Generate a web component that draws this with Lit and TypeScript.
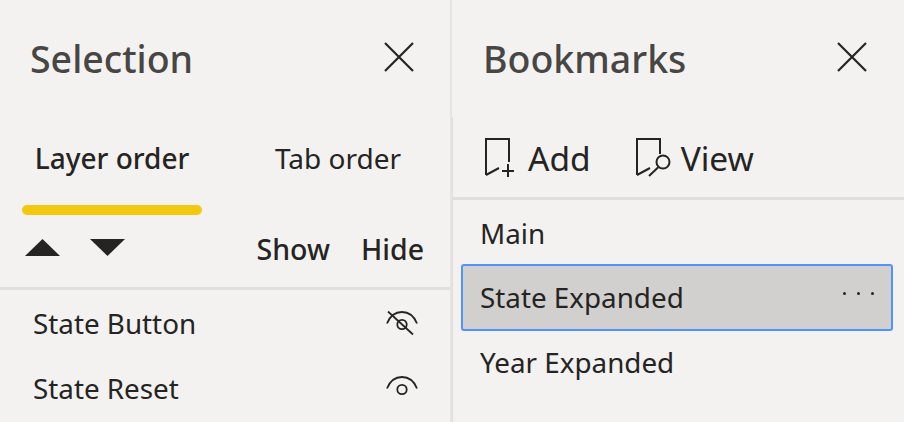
import { LitElement, css, html, svg, TemplateResult } from "lit";
import { customElement } from "lit/decorators.js";

const closeIcon = html`<svg class="close" width="32" height="32" viewBox="0 0 32 32">
    <path d="M2 2L30 30M30 2L2 30" fill="none" stroke="#252423" stroke-width="2.2" />
</svg>`;

const eyeArc = svg`<path d="M1 12.500C4 5 9 1 16 1S28 5 31 12.500" fill="none" stroke="#252423" stroke-width="1.800" />`;

const eyeOpen = html`<svg width="32" height="26" viewBox="0 0 32 26">
    ${eyeArc}
    <circle cx="16" cy="13.500" r="4.700" fill="none" stroke="#252423" stroke-width="1.800" />
</svg>`;

const eyeOff = html`<svg width="32" height="26" viewBox="0 0 32 26">
    ${eyeArc}
    <circle cx="16" cy="13.500" r="4.700" fill="none" stroke="#252423" stroke-width="1.800" />
    <path d="M2 0.500L27 23.500" fill="none" stroke="#252423" stroke-width="1.800" />
</svg>`;

const bookmarkAdd = html`<svg width="34" height="40" viewBox="0 0 34 40">
    <path d="M1 38V2H24V25M1 38L14 31" fill="none" stroke="#252423" stroke-width="2" />
    <path d="M17 34H29M23 27V40" fill="none" stroke="#252423" stroke-width="2" />
</svg>`;

const bookmarkView = html`<svg width="36" height="40" viewBox="0 0 36 40">
    <path d="M1 38V2H24V17M1 38L14 31" fill="none" stroke="#252423" stroke-width="2" />
    <circle cx="27" cy="25" r="6.500" fill="none" stroke="#252423" stroke-width="2" />
    <path d="M13 39L22.500 30" fill="none" stroke="#252423" stroke-width="2" />
</svg>`;

const triangle = (up: boolean): TemplateResult => html`<svg width="35" height="17" viewBox="0 0 35 17">
    <path d=${up ? "M0 17L17.500 0L35 17Z" : "M0 0H35L17.500 17Z"} fill="#252423" />
</svg>`;

const layers = [
    { name: "State Button", icon: eyeOff },
    { name: "State Reset", icon: eyeOpen },
];

const bookmarks = ["Main", "State Expanded", "Year Expanded"];

@customElement("app-root")
export class AppRoot extends LitElement {
    protected render(): TemplateResult {
        return html`
            <div class="page">
                <section class="selection">
                    <header>
                        <h1>Selection</h1>
                        ${closeIcon}
                    </header>
                    <div class="tabs">
                        <div class="tab active">Layer order<span class="bar"></span></div>
                        <div class="tab">Tab order</div>
                    </div>
                    <div class="order-bar">
                        <div class="arrows">${triangle(true)}${triangle(false)}</div>
                        <div class="toggles"><span>Show</span><span>Hide</span></div>
                    </div>
                    <div class="layers">
                        ${layers.map(
                            (l) => html`<div class="layer"><span>${l.name}</span>${l.icon}</div>`
                        )}
                    </div>
                </section>
                <section class="bookmarks">
                    <header>
                        <h1>Bookmarks</h1>
                        ${closeIcon}
                    </header>
                    <div class="body">
                        <div class="actions">
                            <div class="action">${bookmarkAdd}<span>Add</span></div>
                            <div class="action">${bookmarkView}<span>View</span></div>
                        </div>
                        <div class="list">
                            ${bookmarks.map(
                                (b, i) => html`<div class="bookmark ${i === 1 ? "selected" : ""}">
                                    <span>${b}</span>
                                    ${i === 1 ? html`<span class="dots"><i></i><i></i><i></i></span>` : ""}
                                </div>`
                            )}
                        </div>
                    </div>
                </section>
            </div>
        `;
    }

    static styles = css`
        :host {
            display: block;
            font-family: "Noto Sans", "Open Sans", sans-serif;
            color: #252423;
        }
        .page {
            display: flex;
            width: 904px;
            height: 422px;
            overflow: hidden;
            background: #f3f2f1;
        }
        section {
            box-sizing: border-box;
        }
        .selection {
            width: 452px;
            border-right: 2px solid #e6e4e2;
        }
        .bookmarks {
            width: 452px;
            display: flex;
            flex-direction: column;
        }
        header {
            box-sizing: border-box;
            height: 117px;
            display: flex;
            align-items: center;
            justify-content: space-between;
            padding: 0 35px 4px 30px;
        }
        .bookmarks header {
            padding-left: 31px;
            padding-right: 36px;
        }
        h1 {
            margin: 4px 0 0;
            font-size: 37.500px;
            font-weight: 500;
            color: #484644;
        }
        .close {
            display: block;
        }
        .tabs {
            display: flex;
            height: 98px;
            padding-left: 22px;
        }
        .tab {
            box-sizing: border-box;
            width: 180px;
            height: 98px;
            display: flex;
            flex-direction: column;
            align-items: center;
            padding-top: 19px;
            font-size: 28px;
            line-height: 44px;
            white-space: nowrap;
        }
        .tab + .tab {
            margin-left: 46px;
        }
        .tab.active {
            font-weight: 500;
        }
        .bar {
            width: 100%;
            height: 10px;
            margin-top: auto;
            border-radius: 5px;
            background: #f2c811;
        }
        .order-bar {
            box-sizing: border-box;
            height: 75px;
            display: flex;
            justify-content: space-between;
            align-items: flex-start;
            padding: 24px 26px 0 25px;
            border-bottom: 3px solid #e1dfdd;
        }
        .arrows {
            display: flex;
            gap: 30px;
        }
        .arrows svg {
            display: block;
        }
        .toggles {
            display: flex;
            gap: 31px;
            margin-top: -10px;
            font-size: 28.500px;
            font-weight: 500;
            line-height: 40px;
        }
        .layers {
            padding: 0 32px 0 33px;
        }
        .layer {
            height: 65px;
            display: flex;
            align-items: center;
            justify-content: space-between;
            font-size: 27.800px;
        }
        .layer svg {
            display: block;
            margin-top: 2px;
        }
        .body {
            flex: 1;
            border-left: 1px solid #e1dfdd;
        }
        .actions {
            box-sizing: border-box;
            height: 83px;
            display: flex;
            gap: 45px;
            padding: 20px 0 0 32px;
            border-bottom: 3px solid #e1dfdd;
        }
        .action {
            display: flex;
            align-items: flex-start;
            gap: 9px;
            font-size: 33.500px;
            line-height: 42px;
        }
        .action svg {
            display: block;
            flex: none;
        }
        .list {
            padding: 0 11px 0 8px;
        }
        .bookmark {
            box-sizing: border-box;
            height: 65px;
            display: flex;
            align-items: center;
            justify-content: space-between;
            padding: 0 18px 4px 19px;
            font-size: 27.800px;
        }
        .bookmark:first-child {
            height: 64px;
            padding-top: 1px;
            padding-bottom: 0;
        }
        .bookmark.selected {
            height: 67px;
            padding: 0 17px 2px 17px;
            background: #d2d0ce;
            border: 2px solid #4f94ff;
            border-radius: 3px;
        }
        .dots {
            display: flex;
            gap: 10.500px;
            margin-top: -6px;
        }
        .dots i {
            width: 3.500px;
            height: 3.500px;
            border-radius: 50%;
            background: #252423;
        }
    `;
}
